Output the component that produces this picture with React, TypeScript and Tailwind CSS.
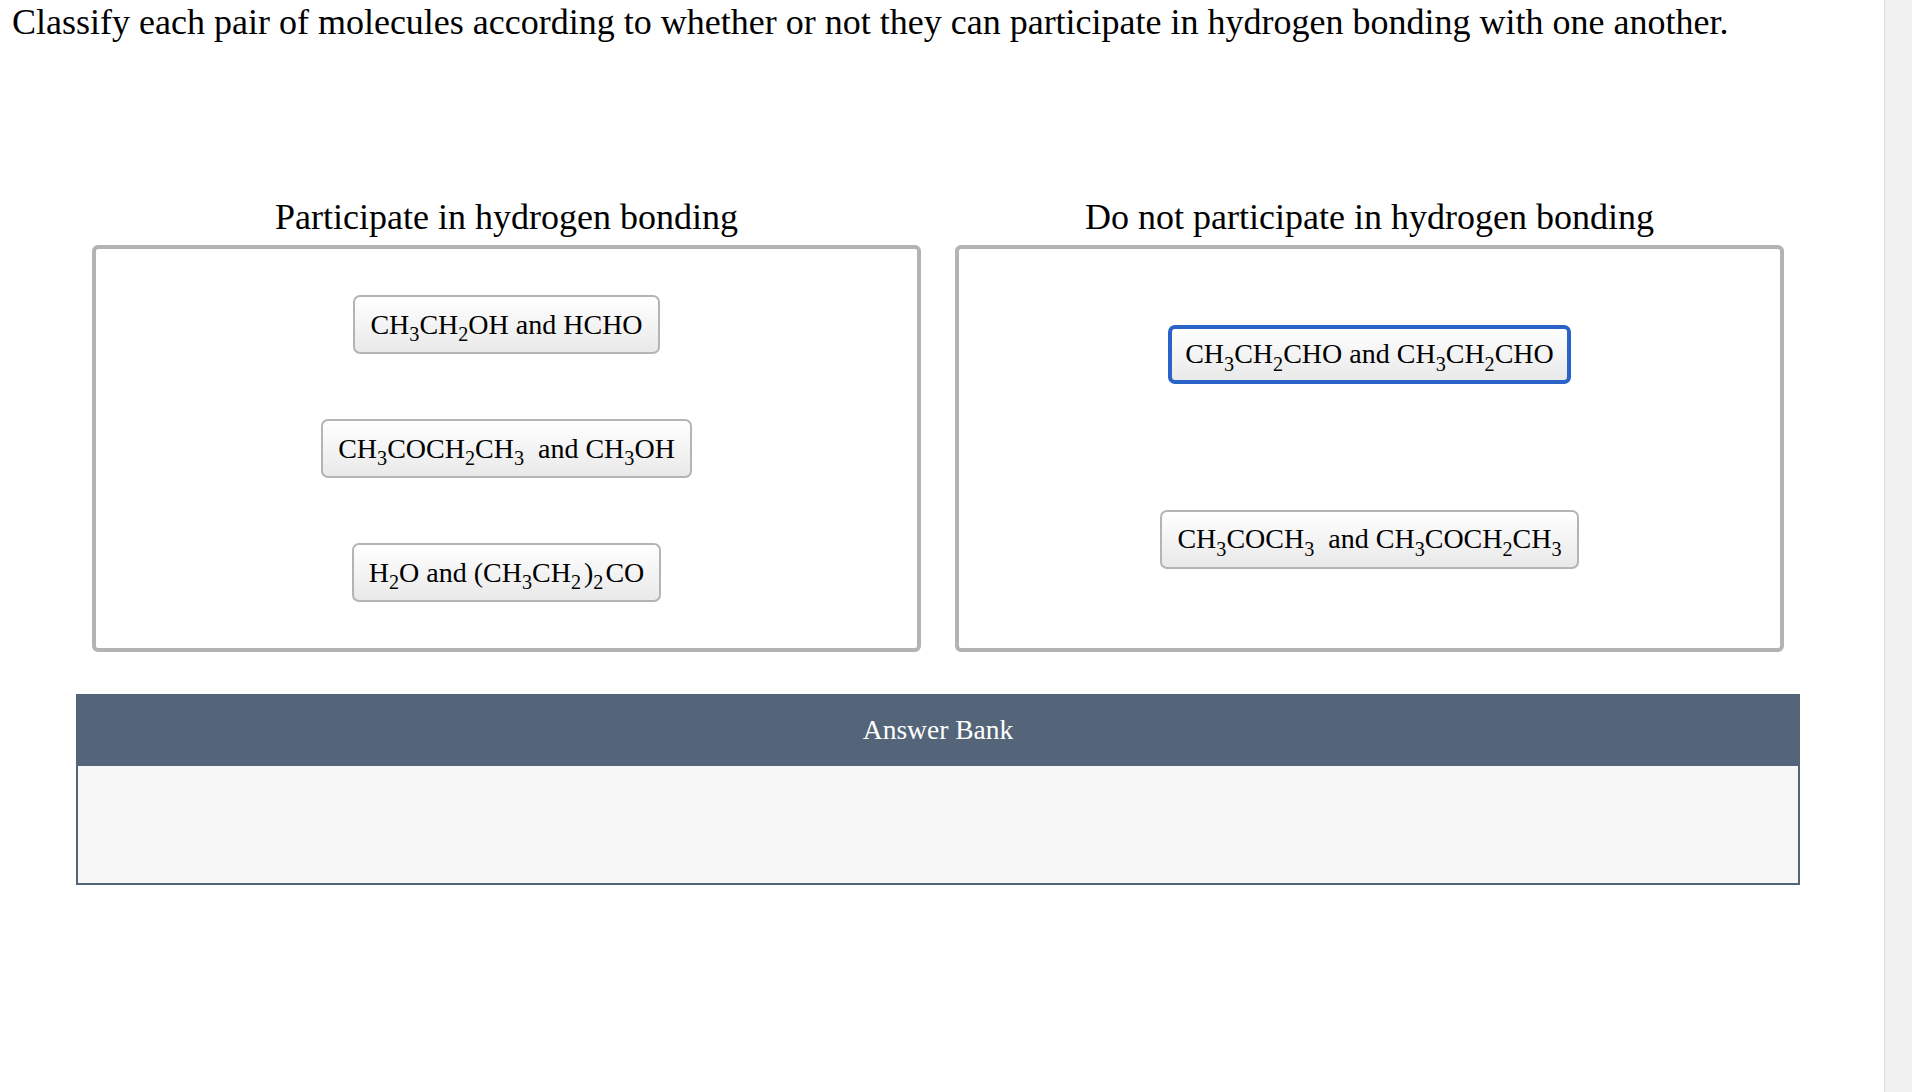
import React from "react";

const serif = { fontFamily: '"Liberation Serif", "Times New Roman", serif' };

function F({ s }: { s: string }) {
  const parts: React.ReactNode[] = [];
  let i = 0;
  let k = 0;
  while (i < s.length) {
    if (s[i] === "_") {
      parts.push(
        <sub key={k++} className="text-[0.72em] relative top-[0.05em] align-sub leading-none">
          {s[i + 1]}
        </sub>
      );
      i += 2;
    } else {
      let j = i;
      while (j < s.length && s[j] !== "_") j++;
      parts.push(<span key={k++}>{s.slice(i, j)}</span>);
      i = j;
    }
  }
  return <span>{parts}</span>;
}

function Chip({ children, selected }: { children: React.ReactNode; selected?: boolean }) {
  return (
    <div
      className={
        "h-[59px] flex items-center justify-center rounded-[7px] bg-gradient-to-b from-[#ffffff] to-[#e9e9e9] text-[28px] text-black whitespace-nowrap " +
        (selected ? "border-[4px] border-[#2a63c8] px-[13px]" : "border-2 border-[#b4b4b4] px-[15px]")
      }
    >
      {children}
    </div>
  );
}

export default function App() {
  return (
    <div className="w-[1912px] h-[1092px] flex overflow-hidden bg-white" style={serif}>
      <div className="flex-1 flex flex-col">
        <div className="pl-[12px] pt-[2px] text-[36px] leading-[40px] text-black">
          Classify each pair of molecules according to whether or not they can participate in hydrogen bonding with one another.
        </div>

        <div className="mt-[155px] ml-[92px] flex gap-[34px]">
          <div className="w-[829px] flex flex-col">
            <div className="text-center text-[36px] leading-[40px] mb-[8px]">Participate in hydrogen bonding</div>
            <div className="h-[407px] border-[4px] border-[#b3b3b3] rounded-[6px] flex flex-col items-center justify-center gap-[65px]">
              <Chip>
                <F s="CH_3CH_2OH" />
                <span>&nbsp;and&nbsp;</span>
                <F s="HCHO" />
              </Chip>
              <Chip>
                <F s="CH_3COCH_2CH_3" />
                <span>&nbsp;&nbsp;and&nbsp;</span>
                <F s="CH_3OH" />
              </Chip>
              <Chip>
                <F s="H_2O" />
                <span>&nbsp;and&nbsp;</span>
                <span>
                  (<F s="CH_3CH_2" />
                  <span className="ml-[3px]">)</span>
                  <F s="_2" />
                  <span className="ml-[2px]">CO</span>
                </span>
              </Chip>
            </div>
          </div>
          <div className="w-[829px] flex flex-col">
            <div className="text-center text-[36px] leading-[40px] mb-[8px]">Do not participate in hydrogen bonding</div>
            <div className="h-[407px] border-[4px] border-[#b3b3b3] rounded-[6px] flex flex-col items-center justify-center gap-[126px] pb-[4px]">
              <Chip selected>
                <F s="CH_3CH_2CHO" />
                <span>&nbsp;and&nbsp;</span>
                <F s="CH_3CH_2CHO" />
              </Chip>
              <Chip>
                <F s="CH_3COCH_3" />
                <span>&nbsp;&nbsp;and&nbsp;</span>
                <F s="CH_3COCH_2CH_3" />
              </Chip>
            </div>
          </div>
        </div>

        <div className="mt-[42px] ml-[76px] w-[1724px] flex flex-col">
          <div className="h-[72px] bg-[#546579] flex items-center justify-center text-white text-[27.5px]">
            Answer Bank
          </div>
          <div className="h-[119px] bg-[#f7f7f7] border-2 border-t-0 border-[#546579]"></div>
        </div>
      </div>
      <div className="w-[28px] h-full bg-[#f1f1f1] border-l border-[#dcdcdc]"></div>
    </div>
  );
}
